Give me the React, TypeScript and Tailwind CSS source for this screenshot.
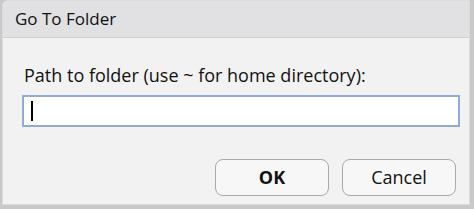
export default function App() {
  return (
    <div className="w-[474px] h-[209px] bg-[#c9c9c9] pl-[2px] pr-[4px] pb-[4px] font-['Open_Sans','Liberation_Sans',sans-serif] text-[#111]">
      <div className="h-full flex flex-col bg-[#f2f2f2] rounded-tl-[6px] border border-[#dcdcdc] overflow-hidden">
        <div className="h-[37px] shrink-0 bg-[#e1e1e3] border-b border-[#cfcfd1] flex items-center pl-[12px] text-[17px]">
          Go To Folder
        </div>
        <div className="flex-1 flex flex-col pl-[19px] pr-[13px] pt-[25px]">
          <div className="text-[18px] leading-[24px] pl-[2px]">Path to folder (use ~ for home directory):</div>
          <div className="mt-[8px] h-[32px] w-[438px] border-2 border-[#92aad8] bg-white flex items-center pl-[7px]">
            <div className="w-[2px] h-[20px] bg-black" />
          </div>
          <div className="mt-[32px] flex justify-end gap-[13px]">
            <button className="w-[114px] h-[37px] rounded-[8px] border border-[#a9a9a9] bg-[#f7f7f7] text-[18px] font-bold">
              OK
            </button>
            <button className="w-[114px] h-[37px] rounded-[8px] border border-[#a9a9a9] bg-[#f7f7f7] text-[18px]">
              Cancel
            </button>
          </div>
        </div>
      </div>
    </div>
  );
}
